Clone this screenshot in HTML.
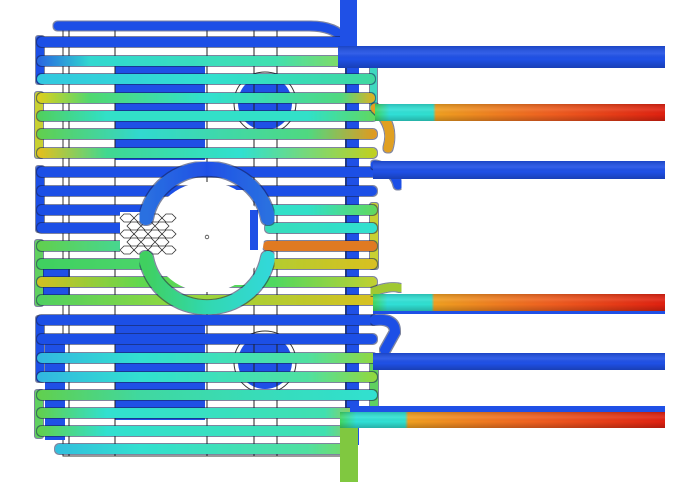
<!DOCTYPE html>
<html><head><meta charset="utf-8"><style>
html,body{margin:0;padding:0;background:#fff;width:700px;height:482px;overflow:hidden}
svg{display:block}
</style></head><body>
<svg width="700" height="482" viewBox="0 0 700 482" xmlns="http://www.w3.org/2000/svg">
<defs>
<filter id="ol" x="-5%" y="-5%" width="110%" height="110%">
<feMorphology in="SourceAlpha" operator="dilate" radius="0.8" result="d"/>
<feFlood flood-color="#102050" flood-opacity="0.55"/>
<feComposite in2="d" operator="in" result="o"/>
<feMerge><feMergeNode in="o"/><feMergeNode in="SourceGraphic"/></feMerge>
</filter>
<linearGradient id="vsh" x1="0" y1="0" x2="0" y2="1">
<stop offset="0" stop-color="#000" stop-opacity="0.25"/>
<stop offset="0.35" stop-color="#fff" stop-opacity="0.15"/>
<stop offset="0.6" stop-color="#000" stop-opacity="0"/>
<stop offset="1" stop-color="#000" stop-opacity="0.35"/>
</linearGradient>
<linearGradient id="gB" gradientUnits="userSpaceOnUse" x1="40" y1="0" x2="375" y2="0"><stop offset="0" stop-color="#1f50e6"/><stop offset="1" stop-color="#1f50e6"/></linearGradient>
<linearGradient id="g1" gradientUnits="userSpaceOnUse" x1="40" y1="0" x2="375" y2="0"><stop offset="0" stop-color="#2a6ae0"/><stop offset="0.15" stop-color="#30d8d0"/><stop offset="0.7" stop-color="#40e0b0"/><stop offset="1" stop-color="#a0d840"/></linearGradient>
<linearGradient id="g2" gradientUnits="userSpaceOnUse" x1="40" y1="0" x2="375" y2="0"><stop offset="0" stop-color="#30c8e0"/><stop offset="0.5" stop-color="#30e0d0"/><stop offset="1" stop-color="#40d8a0"/></linearGradient>
<linearGradient id="g3" gradientUnits="userSpaceOnUse" x1="40" y1="0" x2="375" y2="0"><stop offset="0" stop-color="#d8d020"/><stop offset="0.15" stop-color="#50d870"/><stop offset="0.5" stop-color="#30e0d0"/><stop offset="0.9" stop-color="#50d880"/><stop offset="1" stop-color="#e0b020"/></linearGradient>
<linearGradient id="g4" gradientUnits="userSpaceOnUse" x1="40" y1="0" x2="375" y2="0"><stop offset="0" stop-color="#50d060"/><stop offset="0.2" stop-color="#30e0c8"/><stop offset="0.8" stop-color="#30e0c8"/><stop offset="1" stop-color="#60d860"/></linearGradient>
<linearGradient id="g5" gradientUnits="userSpaceOnUse" x1="40" y1="0" x2="375" y2="0"><stop offset="0" stop-color="#60d050"/><stop offset="0.3" stop-color="#30d8d0"/><stop offset="0.8" stop-color="#50d880"/><stop offset="1" stop-color="#e09a20"/></linearGradient>
<linearGradient id="g6" gradientUnits="userSpaceOnUse" x1="40" y1="0" x2="375" y2="0"><stop offset="0" stop-color="#e0c020"/><stop offset="0.2" stop-color="#40d890"/><stop offset="0.6" stop-color="#30e0d0"/><stop offset="1" stop-color="#c0d020"/></linearGradient>
<linearGradient id="g7" gradientUnits="userSpaceOnUse" x1="40" y1="0" x2="375" y2="0"><stop offset="0" stop-color="#40d060"/><stop offset="0.5" stop-color="#50d870"/><stop offset="1" stop-color="#e0a020"/></linearGradient>
<linearGradient id="g8" gradientUnits="userSpaceOnUse" x1="40" y1="0" x2="375" y2="0"><stop offset="0" stop-color="#50d060"/><stop offset="0.4" stop-color="#90d840"/><stop offset="1" stop-color="#d8c020"/></linearGradient>
<linearGradient id="g9" gradientUnits="userSpaceOnUse" x1="40" y1="0" x2="375" y2="0"><stop offset="0" stop-color="#d0c020"/><stop offset="0.3" stop-color="#60d850"/><stop offset="0.7" stop-color="#50d860"/><stop offset="1" stop-color="#c0d030"/></linearGradient>
<linearGradient id="g10" gradientUnits="userSpaceOnUse" x1="40" y1="0" x2="375" y2="0"><stop offset="0" stop-color="#30b8e0"/><stop offset="0.3" stop-color="#30e0d0"/><stop offset="0.8" stop-color="#50e0a0"/><stop offset="1" stop-color="#90d840"/></linearGradient>
<linearGradient id="g11" gradientUnits="userSpaceOnUse" x1="40" y1="0" x2="375" y2="0"><stop offset="0" stop-color="#60d050"/><stop offset="0.3" stop-color="#40d8a0"/><stop offset="1" stop-color="#30e0d0"/></linearGradient>
<linearGradient id="g12" gradientUnits="userSpaceOnUse" x1="40" y1="0" x2="375" y2="0"><stop offset="0" stop-color="#60d050"/><stop offset="0.2" stop-color="#30e0d0"/><stop offset="0.85" stop-color="#40e0b0"/><stop offset="1" stop-color="#d0c020"/></linearGradient>
<linearGradient id="gR" x1="0" x2="1"><stop offset="0" stop-color="#40d860"/><stop offset="0.05" stop-color="#30e0d8"/><stop offset="0.2" stop-color="#30e0d0"/><stop offset="0.21" stop-color="#f0a020"/><stop offset="0.6" stop-color="#f06020"/><stop offset="1" stop-color="#e02010"/></linearGradient>
<linearGradient id="gArcB" x1="0" x2="1"><stop offset="0" stop-color="#40d060"/><stop offset="0.5" stop-color="#30d8b0"/><stop offset="1" stop-color="#30d8d8"/></linearGradient>
<linearGradient id="gArcT" x1="0" x2="1"><stop offset="0" stop-color="#2a70e0"/><stop offset="0.5" stop-color="#1f50e6"/><stop offset="1" stop-color="#2a70e0"/></linearGradient>
</defs>

<rect x="63" y="30" width="285" height="426" fill="#fff" stroke="#333" stroke-width="1"/>
<rect x="115" y="65" width="90" height="95" fill="#1f50e6"/>
<rect x="115" y="325" width="90" height="95" fill="#1f50e6"/>
<rect x="40" y="260" width="30" height="40" fill="#1f50e6"/>
<rect x="45" y="340" width="20" height="100" fill="#1f50e6"/>
<rect x="345" y="65" width="14" height="380" fill="#1f50e6"/>
<circle cx="265" cy="103" r="31" fill="#fff" stroke="#333" stroke-width="1"/>
<circle cx="265" cy="103" r="27" fill="#1f50e6"/>
<circle cx="265" cy="362" r="31" fill="#fff" stroke="#333" stroke-width="1"/>
<circle cx="265" cy="362" r="27" fill="#1f50e6"/>
<g stroke="#222" stroke-width="1">
<line x1="69" y1="30" x2="69" y2="456"/>
<line x1="346" y1="30" x2="346" y2="456"/>
<line x1="115" y1="30" x2="115" y2="456"/>
<line x1="207" y1="30" x2="207" y2="456"/>
<line x1="254" y1="30" x2="254" y2="456"/>
<line x1="277" y1="30" x2="277" y2="456"/>
</g>

<g filter="url(#ol)">
<path d="M58 26 H310 Q335 26 345 40" stroke="#1f50e6" stroke-width="9" fill="none" stroke-linecap="round"/>
<rect x="35" y="92" width="8" height="66" rx="3" fill="#c8d030"/>
<rect x="35" y="240" width="8" height="66" rx="3" fill="#60d060"/>
<rect x="35" y="390" width="8" height="48" rx="3" fill="#60d060"/>
<rect x="36" y="36" width="8" height="48" rx="3" fill="#1f50e6"/>
<rect x="36" y="166" width="8" height="66" rx="3" fill="#1f50e6"/>
<rect x="36" y="316" width="8" height="66" rx="3" fill="#1f50e6"/>
<rect x="370" y="203" width="8" height="66" rx="3" fill="#c8d030"/>
<rect x="370" y="355" width="8" height="55" rx="3" fill="#60d060"/>
<rect x="370" y="62" width="7" height="50" rx="3" fill="#40d8c0"/>
</g>

<g stroke-linecap="round" stroke-width="10" fill="none" filter="url(#ol)">
<line x1="42" y1="42" x2="345" y2="42" stroke="url(#gB)"/>
<line x1="42" y1="61" x2="345" y2="61" stroke="url(#g1)"/>
<line x1="42" y1="79" x2="370" y2="79" stroke="url(#g2)"/>
<line x1="42" y1="98" x2="370" y2="98" stroke="url(#g3)"/>
<line x1="42" y1="116" x2="372" y2="116" stroke="url(#g4)"/>
<line x1="42" y1="134" x2="372" y2="134" stroke="url(#g5)"/>
<line x1="42" y1="153" x2="372" y2="153" stroke="url(#g6)"/>
<line x1="42" y1="172" x2="372" y2="172" stroke="url(#gB)"/>
<line x1="42" y1="191" x2="372" y2="191" stroke="url(#gB)"/>
<line x1="42" y1="210" x2="145" y2="210" stroke="url(#gB)"/>
<line x1="270" y1="210" x2="372" y2="210" stroke="url(#g4)"/>
<line x1="42" y1="228" x2="150" y2="228" stroke="url(#gB)"/>
<line x1="270" y1="228" x2="372" y2="228" stroke="url(#g11)"/>
<line x1="42" y1="246" x2="150" y2="246" stroke="url(#g11)"/>
<line x1="268" y1="246" x2="372" y2="246" stroke="#e07a20"/>
<line x1="42" y1="264" x2="145" y2="264" stroke="url(#g7)"/>
<line x1="270" y1="264" x2="372" y2="264" stroke="url(#g8)"/>
<line x1="42" y1="282" x2="372" y2="282" stroke="url(#g9)"/>
<line x1="42" y1="300" x2="372" y2="300" stroke="url(#g8)"/>
<line x1="42" y1="320" x2="372" y2="320" stroke="url(#gB)"/>
<line x1="42" y1="339" x2="372" y2="339" stroke="url(#gB)"/>
<line x1="42" y1="358" x2="372" y2="358" stroke="url(#g10)"/>
<line x1="42" y1="377" x2="372" y2="377" stroke="url(#g10)"/>
<line x1="42" y1="395" x2="372" y2="395" stroke="url(#g11)"/>
<line x1="42" y1="413" x2="372" y2="413" stroke="url(#g12)"/>
<line x1="42" y1="431" x2="350" y2="431" stroke="url(#g12)"/>
<line x1="60" y1="449" x2="345" y2="449" stroke="url(#g10)"/>
</g>

<ellipse cx="207" cy="237" rx="57" ry="55" fill="#fff"/>
<rect x="207" y="190" width="46" height="95" fill="#fff"/>
<rect x="250" y="210" width="8" height="40" fill="#1f50e6"/>
<g stroke="#333" stroke-width="0.8" fill="#fff">
<rect x="120" y="212" width="56" height="44" fill="#fff" stroke="none"/>
<path d="M120 218 l4-4 h6 l4 4 l-4 4 h-6z M134 218 l4-4 h6 l4 4 l-4 4 h-6z M148 218 l4-4 h6 l4 4 l-4 4 h-6z M162 218 l4-4 h6 l4 4 l-4 4 h-6z
M127 226 l4-4 h6 l4 4 l-4 4 h-6z M141 226 l4-4 h6 l4 4 l-4 4 h-6z M155 226 l4-4 h6 l4 4 l-4 4 h-6z
M120 234 l4-4 h6 l4 4 l-4 4 h-6z M134 234 l4-4 h6 l4 4 l-4 4 h-6z M148 234 l4-4 h6 l4 4 l-4 4 h-6z M162 234 l4-4 h6 l4 4 l-4 4 h-6z
M127 242 l4-4 h6 l4 4 l-4 4 h-6z M141 242 l4-4 h6 l4 4 l-4 4 h-6z M155 242 l4-4 h6 l4 4 l-4 4 h-6z
M120 250 l4-4 h6 l4 4 l-4 4 h-6z M134 250 l4-4 h6 l4 4 l-4 4 h-6z M148 250 l4-4 h6 l4 4 l-4 4 h-6z M162 250 l4-4 h6 l4 4 l-4 4 h-6z"/>
</g>
<circle cx="207" cy="237" r="1.8" fill="none" stroke="#444" stroke-width="0.8"/>
<g filter="url(#ol)">
<path d="M146 218 A62 60 0 0 1 268 218" stroke="url(#gArcT)" stroke-width="14" fill="none" stroke-linecap="round"/>
<path d="M146 258 A62 60 0 0 0 268 258" stroke="url(#gArcB)" stroke-width="14" fill="none" stroke-linecap="round"/>
</g>

<g stroke-linecap="round" fill="none" filter="url(#ol)">
<path d="M375 108 Q395 125 388 148" stroke="#e0a020" stroke-width="9"/>
<path d="M375 165 Q395 170 398 185" stroke="#1f50e6" stroke-width="9"/>
<path d="M372 292 Q390 285 400 288" stroke="#a0c830" stroke-width="8"/>
<path d="M375 320 Q395 318 395 332 L385 350" stroke="#1f50e6" stroke-width="10"/>
</g>

<rect x="340" y="0" width="17" height="56" fill="#1f50e6"/>
<rect x="340" y="412" width="18" height="70" fill="#80c840"/>

<rect x="338" y="46" width="327" height="22" fill="#1f50e6"/>
<rect x="338" y="46" width="327" height="22" fill="url(#vsh)" opacity="0.6"/>
<rect x="375" y="104" width="290" height="17" fill="url(#gR)"/>
<rect x="375" y="104" width="290" height="17" fill="url(#vsh)" opacity="0.6"/>
<rect x="373" y="161" width="292" height="18" fill="#1f50e6"/>
<rect x="373" y="161" width="292" height="18" fill="url(#vsh)" opacity="0.6"/>
<rect x="373" y="310" width="292" height="4" fill="#1f50e6"/>
<rect x="373" y="294" width="292" height="17" fill="url(#gR)"/>
<rect x="373" y="294" width="292" height="17" fill="url(#vsh)" opacity="0.6"/>
<rect x="373" y="353" width="292" height="17" fill="#1f50e6"/>
<rect x="373" y="353" width="292" height="17" fill="url(#vsh)" opacity="0.6"/>
<rect x="350" y="406" width="315" height="7" fill="#1f50e6"/>
<rect x="340" y="412" width="325" height="16" fill="url(#gR)"/>
<rect x="340" y="412" width="325" height="16" fill="url(#vsh)" opacity="0.6"/>
</svg>
</body></html>
